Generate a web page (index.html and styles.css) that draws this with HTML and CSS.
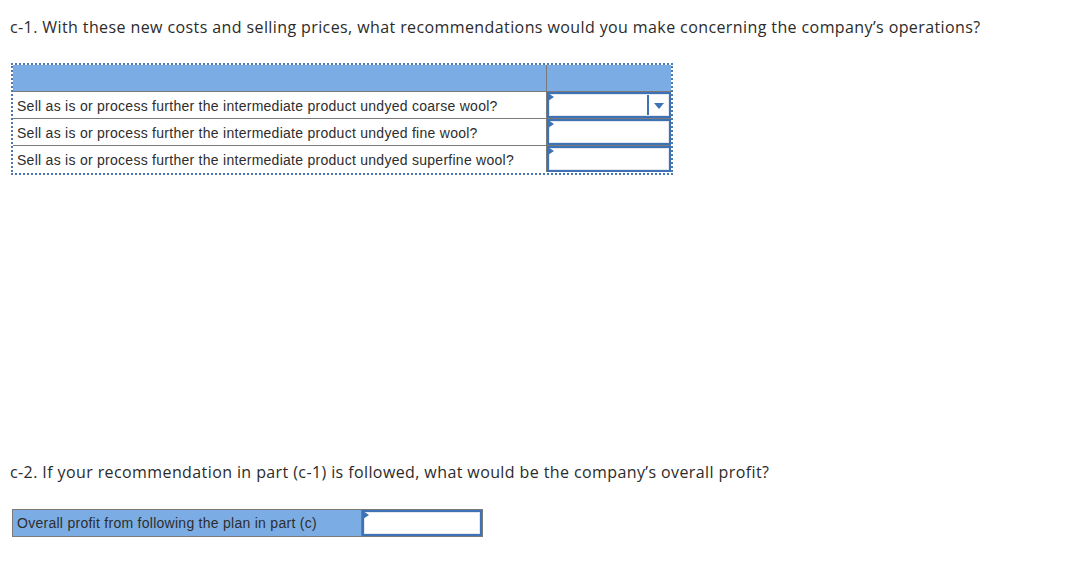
FILE: index.html
```html
<!DOCTYPE html>
<html>
<head>
<meta charset="utf-8">
<link rel="stylesheet" href="styles.css">
</head>
<body>
<p class="question q1">c-1. With these new costs and selling prices, what recommendations would you make concerning the company’s operations?</p>
<div class="grid-wrap">
  <table class="grid">
    <colgroup><col class="c-label"><col class="c-input"></colgroup>
    <tr class="head"><th></th><th></th></tr>
    <tr>
      <td class="label">Sell as is or process further the intermediate product undyed coarse wool?</td>
      <td class="cell"><div class="field select"><span class="marker"></span><span class="dd"><span class="arrow"></span></span></div></td>
    </tr>
    <tr>
      <td class="label">Sell as is or process further the intermediate product undyed fine wool?</td>
      <td class="cell"><div class="field"><span class="marker"></span></div></td>
    </tr>
    <tr>
      <td class="label">Sell as is or process further the intermediate product undyed superfine wool?</td>
      <td class="cell"><div class="field"><span class="marker"></span></div></td>
    </tr>
  </table>
</div>
<p class="question q2">c-2. If your recommendation in part (c-1) is followed, what would be the company’s overall profit?</p>
<table class="profit">
  <tr>
    <td class="plabel">Overall profit from following the plan in part (c)</td>
    <td class="cell pcell"><div class="field"><span class="marker"></span></div></td>
  </tr>
</table>
</body>
</html>
```
FILE: styles.css
```css
html, body {
  margin: 0;
  padding: 0;
  background: #ffffff;
}
body {
  padding: 0 10px;
  font-family: "Open Sans", "Liberation Sans", sans-serif;
}
.question {
  margin: 0;
  font-size: 16px;
  letter-spacing: 0.4px;
  line-height: 20px;
  color: #2b2b2b;
  white-space: nowrap;
}
.q1 {
  padding-top: 17px;
}
.grid-wrap {
  margin-top: 26px;
  margin-left: 1px;
  width: 658px;
  padding-bottom: 1px;
  border: 2px dotted #4a78b4;
}
.grid {
  border-collapse: collapse;
  width: 658px;
  table-layout: fixed;
  font-family: "Liberation Sans", Arial, sans-serif;
  font-size: 14px;
  letter-spacing: 0.27px;
  color: #2d2d2d;
}
.c-label { width: 533px; }
.c-input { width: 125px; }
.grid th, .grid td {
  border: 1px solid #7a7a7a;
  padding: 0;
}
.grid tr:first-child th { border-top: none; }
.grid th:first-child, .grid td:first-child { border-left: none; }
.grid th:last-child, .grid td:last-child { border-right: none; }
.grid tr:last-child td { border-bottom: none; }
.head th {
  background: #7bade4;
  height: 26px;
}
.label {
  height: 25px;
  padding: 1px 0 0 4px !important;
  white-space: nowrap;
}
.cell {
  position: relative;
  vertical-align: top;
}
.field {
  position: relative;
  box-sizing: border-box;
  height: 26px;
  background: #ffffff;
  border: 2px solid #3e72b6;
  box-shadow: inset 0 0 0 1px #e4e8ee;
}
.marker {
  position: absolute;
  left: -1px;
  top: -1px;
  width: 0;
  height: 0;
  border-top: 4px solid transparent;
  border-bottom: 4px solid transparent;
  border-left: 6px solid #3e72b6;
}
.select .dd {
  position: absolute;
  right: 0;
  top: 1px;
  bottom: 1px;
  width: 20px;
  border-left: 2px solid #3e72b6;
}
.select .arrow {
  position: absolute;
  left: 5px;
  top: 8px;
  width: 0;
  height: 0;
  border-left: 5px solid transparent;
  border-right: 5px solid transparent;
  border-top: 6px solid #3e72b6;
}
.q2 {
  margin-top: 287px;
}
.profit {
  margin-top: 27px;
  margin-left: 2px;
  border-collapse: collapse;
  table-layout: fixed;
  width: 469px;
  font-family: "Liberation Sans", Arial, sans-serif;
  font-size: 14px;
  letter-spacing: 0.27px;
  color: #2d2d2d;
}
.profit td {
  border: 1px solid #7a7a7a;
  padding: 0;
}
.plabel {
  width: 344px;
  height: 26px;
  background: #7bade4;
  padding-left: 4px !important;
  white-space: nowrap;
}
.pcell { width: 120px; }
.pcell .field { height: 26px; }
```
